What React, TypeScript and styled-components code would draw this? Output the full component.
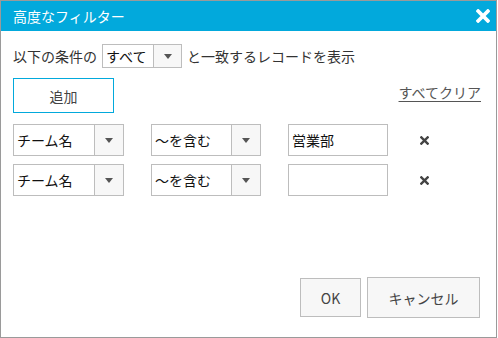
import styled, { createGlobalStyle } from 'styled-components';

const GlobalStyle = createGlobalStyle`
  html, body {
    margin: 0;
    padding: 0;
    background: #ffffff;
  }
  body {
    font-family: 'Noto Sans CJK JP', 'Noto Sans', sans-serif;
    color: #333333;
  }
`;

const Dialog = styled.div`
  box-sizing: border-box;
  width: 497px;
  height: 338px;
  border: 1px solid #9a9a9a;
  display: flex;
  flex-direction: column;
  background: #ffffff;
`;

const Header = styled.div`
  height: 30px;
  background: #02a9dc;
  display: flex;
  align-items: center;
  justify-content: space-between;
  padding: 0 5px 0 12px;
`;

const Title = styled.span`
  color: #ffffff;
  font-size: 14px;
  line-height: 14px;
`;

const CloseButton = styled.button`
  border: none;
  background: transparent;
  padding: 0;
  width: 16px;
  height: 16px;
  display: flex;
  align-items: center;
  justify-content: center;
  cursor: pointer;
`;

const Body = styled.div`
  flex: 1;
  display: flex;
  flex-direction: column;
  padding: 13px 0 0 12px;
`;

const MatchLine = styled.div`
  display: flex;
  align-items: center;
  height: 24px;
  font-size: 14px;
  gap: 5px;
`;

const ActionRow = styled.div`
  display: flex;
  align-items: center;
  justify-content: space-between;
  margin-top: 10px;
  padding-right: 15px;
`;

const AddButton = styled.button`
  box-sizing: border-box;
  width: 101px;
  height: 35px;
  border: 1px solid #02a9dc;
  background: #ffffff;
  font-family: inherit;
  font-size: 14px;
  color: #444444;
  cursor: pointer;
`;

const ClearLink = styled.a`
  font-size: 14px;
  color: #555555;
  text-decoration: underline;
  text-underline-offset: 3px;
  align-self: flex-start;
  margin-top: 4px;
  cursor: pointer;
`;

const Rows = styled.div`
  display: flex;
  flex-direction: column;
  gap: 8px;
  margin-top: 11px;
`;

const FilterRow = styled.div`
  display: flex;
  align-items: center;
  gap: 27px;
`;

const Select = styled.div<{ $w: number; $h: number; $arrow: number }>`
  box-sizing: border-box;
  width: ${(p) => p.$w}px;
  height: ${(p) => p.$h}px;
  border: 1px solid #bdbdbd;
  display: flex;
  background: #ffffff;
  font-size: 14px;
  color: #111111;
  & > span {
    flex: 1;
    display: flex;
    align-items: center;
    padding-left: 3px;
  }
  & > i {
    width: ${(p) => p.$arrow}px;
    border-left: 1px solid #bdbdbd;
    background: #f7f7f7;
    display: flex;
    align-items: center;
    justify-content: center;
  }
`;

const Arrow = styled.b`
  width: 0;
  height: 0;
  border-left: 4px solid transparent;
  border-right: 4px solid transparent;
  border-top: 5px solid #555555;
`;

const TextInput = styled.div`
  box-sizing: border-box;
  width: 100px;
  height: 32px;
  border: 1px solid #bdbdbd;
  display: flex;
  align-items: center;
  padding-left: 3px;
  font-size: 14px;
  color: #111111;
`;

const RemoveButton = styled.button`
  border: none;
  background: transparent;
  padding: 0;
  margin-left: 1px;
  width: 16px;
  height: 16px;
  display: flex;
  align-items: center;
  justify-content: center;
  cursor: pointer;
`;

const Footer = styled.div`
  display: flex;
  justify-content: flex-end;
  align-items: center;
  gap: 6px;
  padding: 0 16px 19px 0;
`;

const FooterButton = styled.button<{ $w: number; $h: number }>`
  box-sizing: border-box;
  width: ${(p) => p.$w}px;
  height: ${(p) => p.$h}px;
  border: 1px solid #bdbdbd;
  background: #f7f7f7;
  font-family: inherit;
  font-size: 14px;
  color: #444444;
  cursor: pointer;
`;

const BoldX = ({ size, color }: { size: number; color: string }) => (
  <svg width={size} height={size} viewBox="0 0 10 10">
    <path d="M1.5 1.5 L8.5 8.5 M8.5 1.5 L1.5 8.5" stroke={color} strokeWidth="2.6" strokeLinecap="square" />
  </svg>
);

const rows = [
  { field: 'チーム名', op: '～を含む', value: '営業部' },
  { field: 'チーム名', op: '～を含む', value: '' },
];

export default function App() {
  return (
    <>
      <GlobalStyle />
      <Dialog>
        <Header>
          <Title>高度なフィルター</Title>
          <CloseButton>
            <BoldX size={14} color="#ffffff" />
          </CloseButton>
        </Header>
        <Body>
          <MatchLine>
            <span>以下の条件の</span>
            <Select $w={80} $h={24} $arrow={27}>
              <span>すべて</span>
              <i>
                <Arrow />
              </i>
            </Select>
            <span>と一致するレコードを表示</span>
          </MatchLine>
          <ActionRow>
            <AddButton>追加</AddButton>
            <ClearLink>すべてクリア</ClearLink>
          </ActionRow>
          <Rows>
            {rows.map((r, i) => (
              <FilterRow key={i}>
                <Select $w={111} $h={32} $arrow={28}>
                  <span>{r.field}</span>
                  <i>
                    <Arrow />
                  </i>
                </Select>
                <Select $w={110} $h={32} $arrow={28}>
                  <span>{r.op}</span>
                  <i>
                    <Arrow />
                  </i>
                </Select>
                <TextInput>{r.value}</TextInput>
                <RemoveButton>
                  <BoldX size={9} color="#444444" />
                </RemoveButton>
              </FilterRow>
            ))}
          </Rows>
        </Body>
        <Footer>
          <FooterButton $w={61} $h={39}>OK</FooterButton>
          <FooterButton $w={113} $h={41}>キャンセル</FooterButton>
        </Footer>
      </Dialog>
    </>
  );
}
